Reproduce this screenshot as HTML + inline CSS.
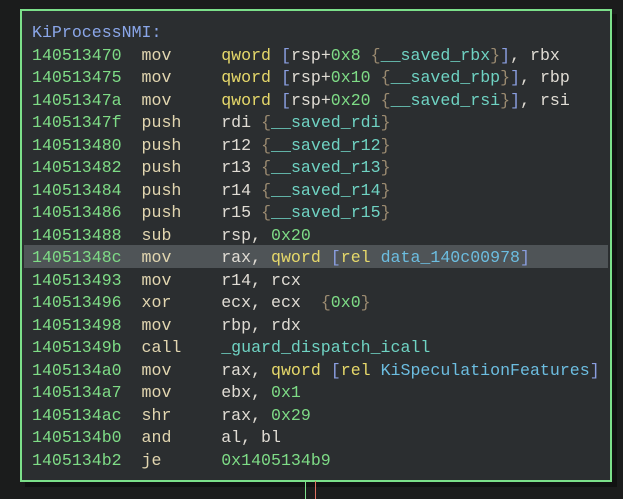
<!DOCTYPE html><html><head><style>
body{margin:0;width:623px;height:499px;background:#1b1c1c;position:relative;overflow:hidden;font-family:"Liberation Mono",monospace;}
.sh{position:absolute;left:25px;top:14px;width:592px;height:473px;background:#111212}
.box{position:absolute;left:20px;top:9px;width:588px;height:469px;border:2px solid #7ce08a;background:#2b2e30}
.in{position:absolute;left:0;top:1px;width:100%;height:100%}
.l{position:absolute;left:10px;white-space:pre;font-size:16.6px;line-height:22px;color:#e0d6c0}
.hl{position:absolute;left:2px;width:584px;height:23px;background:#4f5457}
.a{color:#7edc86}.m{color:#e2d6b0}.q{color:#e6d86a}.b{color:#8a9ee0}.d{color:#6cbde0}.c{color:#6fd3c3}.br{color:#9a8a70}.n{color:#7edc86}.lb{color:#8aa6e8}.w{color:#e0dcd4}
.ln1{position:absolute;top:481px;left:305px;width:1px;height:18px;background:#7ce08a}
.ln2{position:absolute;top:481px;left:315px;width:1px;height:18px;background:#e07060}
</style></head><body>
<div class="sh"></div>
<div class="box">
<div class="hl" style="top:234px"></div>
<div class="in">
<div class="l" style="top:10px"><span class="lb">KiProcessNMI:</span></div>
<div class="l" style="top:32.5px"><span class="a">140513470</span>  <span class="m">mov   </span>  <span class="q">qword</span> <span class="b">[</span><span class="w">rsp+</span><span class="n">0x8</span> <span class="br">{</span><span class="c">__saved_rbx</span><span class="br">}</span><span class="b">]</span><span class="w">, rbx</span></div>
<div class="l" style="top:55px"><span class="a">140513475</span>  <span class="m">mov   </span>  <span class="q">qword</span> <span class="b">[</span><span class="w">rsp+</span><span class="n">0x10</span> <span class="br">{</span><span class="c">__saved_rbp</span><span class="br">}</span><span class="b">]</span><span class="w">, rbp</span></div>
<div class="l" style="top:77.5px"><span class="a">14051347a</span>  <span class="m">mov   </span>  <span class="q">qword</span> <span class="b">[</span><span class="w">rsp+</span><span class="n">0x20</span> <span class="br">{</span><span class="c">__saved_rsi</span><span class="br">}</span><span class="b">]</span><span class="w">, rsi</span></div>
<div class="l" style="top:100px"><span class="a">14051347f</span>  <span class="m">push  </span>  <span class="w">rdi</span> <span class="br">{</span><span class="c">__saved_rdi</span><span class="br">}</span></div>
<div class="l" style="top:122.5px"><span class="a">140513480</span>  <span class="m">push  </span>  <span class="w">r12</span> <span class="br">{</span><span class="c">__saved_r12</span><span class="br">}</span></div>
<div class="l" style="top:145px"><span class="a">140513482</span>  <span class="m">push  </span>  <span class="w">r13</span> <span class="br">{</span><span class="c">__saved_r13</span><span class="br">}</span></div>
<div class="l" style="top:167.5px"><span class="a">140513484</span>  <span class="m">push  </span>  <span class="w">r14</span> <span class="br">{</span><span class="c">__saved_r14</span><span class="br">}</span></div>
<div class="l" style="top:190px"><span class="a">140513486</span>  <span class="m">push  </span>  <span class="w">r15</span> <span class="br">{</span><span class="c">__saved_r15</span><span class="br">}</span></div>
<div class="l" style="top:212.5px"><span class="a">140513488</span>  <span class="m">sub   </span>  <span class="w">rsp, </span><span class="n">0x20</span></div>
<div class="l" style="top:235px"><span class="a">14051348c</span>  <span class="m">mov   </span>  <span class="w">rax, </span><span class="q">qword</span> <span class="b">[</span><span class="q">rel</span> <span class="d">data_140c00978</span><span class="b">]</span></div>
<div class="l" style="top:257.5px"><span class="a">140513493</span>  <span class="m">mov   </span>  <span class="w">r14, rcx</span></div>
<div class="l" style="top:280px"><span class="a">140513496</span>  <span class="m">xor   </span>  <span class="w">ecx, ecx  </span><span class="br">{</span><span class="n">0x0</span><span class="br">}</span></div>
<div class="l" style="top:302.5px"><span class="a">140513498</span>  <span class="m">mov   </span>  <span class="w">rbp, rdx</span></div>
<div class="l" style="top:325px"><span class="a">14051349b</span>  <span class="m">call  </span>  <span class="c">_guard_dispatch_icall</span></div>
<div class="l" style="top:347.5px"><span class="a">1405134a0</span>  <span class="m">mov   </span>  <span class="w">rax, </span><span class="q">qword</span> <span class="b">[</span><span class="q">rel</span> <span class="d">KiSpeculationFeatures</span><span class="b">]</span></div>
<div class="l" style="top:370px"><span class="a">1405134a7</span>  <span class="m">mov   </span>  <span class="w">ebx, </span><span class="n">0x1</span></div>
<div class="l" style="top:392.5px"><span class="a">1405134ac</span>  <span class="m">shr   </span>  <span class="w">rax, </span><span class="n">0x29</span></div>
<div class="l" style="top:415px"><span class="a">1405134b0</span>  <span class="m">and   </span>  <span class="w">al, bl</span></div>
<div class="l" style="top:437.5px"><span class="a">1405134b2</span>  <span class="m">je    </span>  <span class="n">0x1405134b9</span></div>
</div>
</div>
<div class="ln1"></div><div class="ln2"></div>
</body></html>
